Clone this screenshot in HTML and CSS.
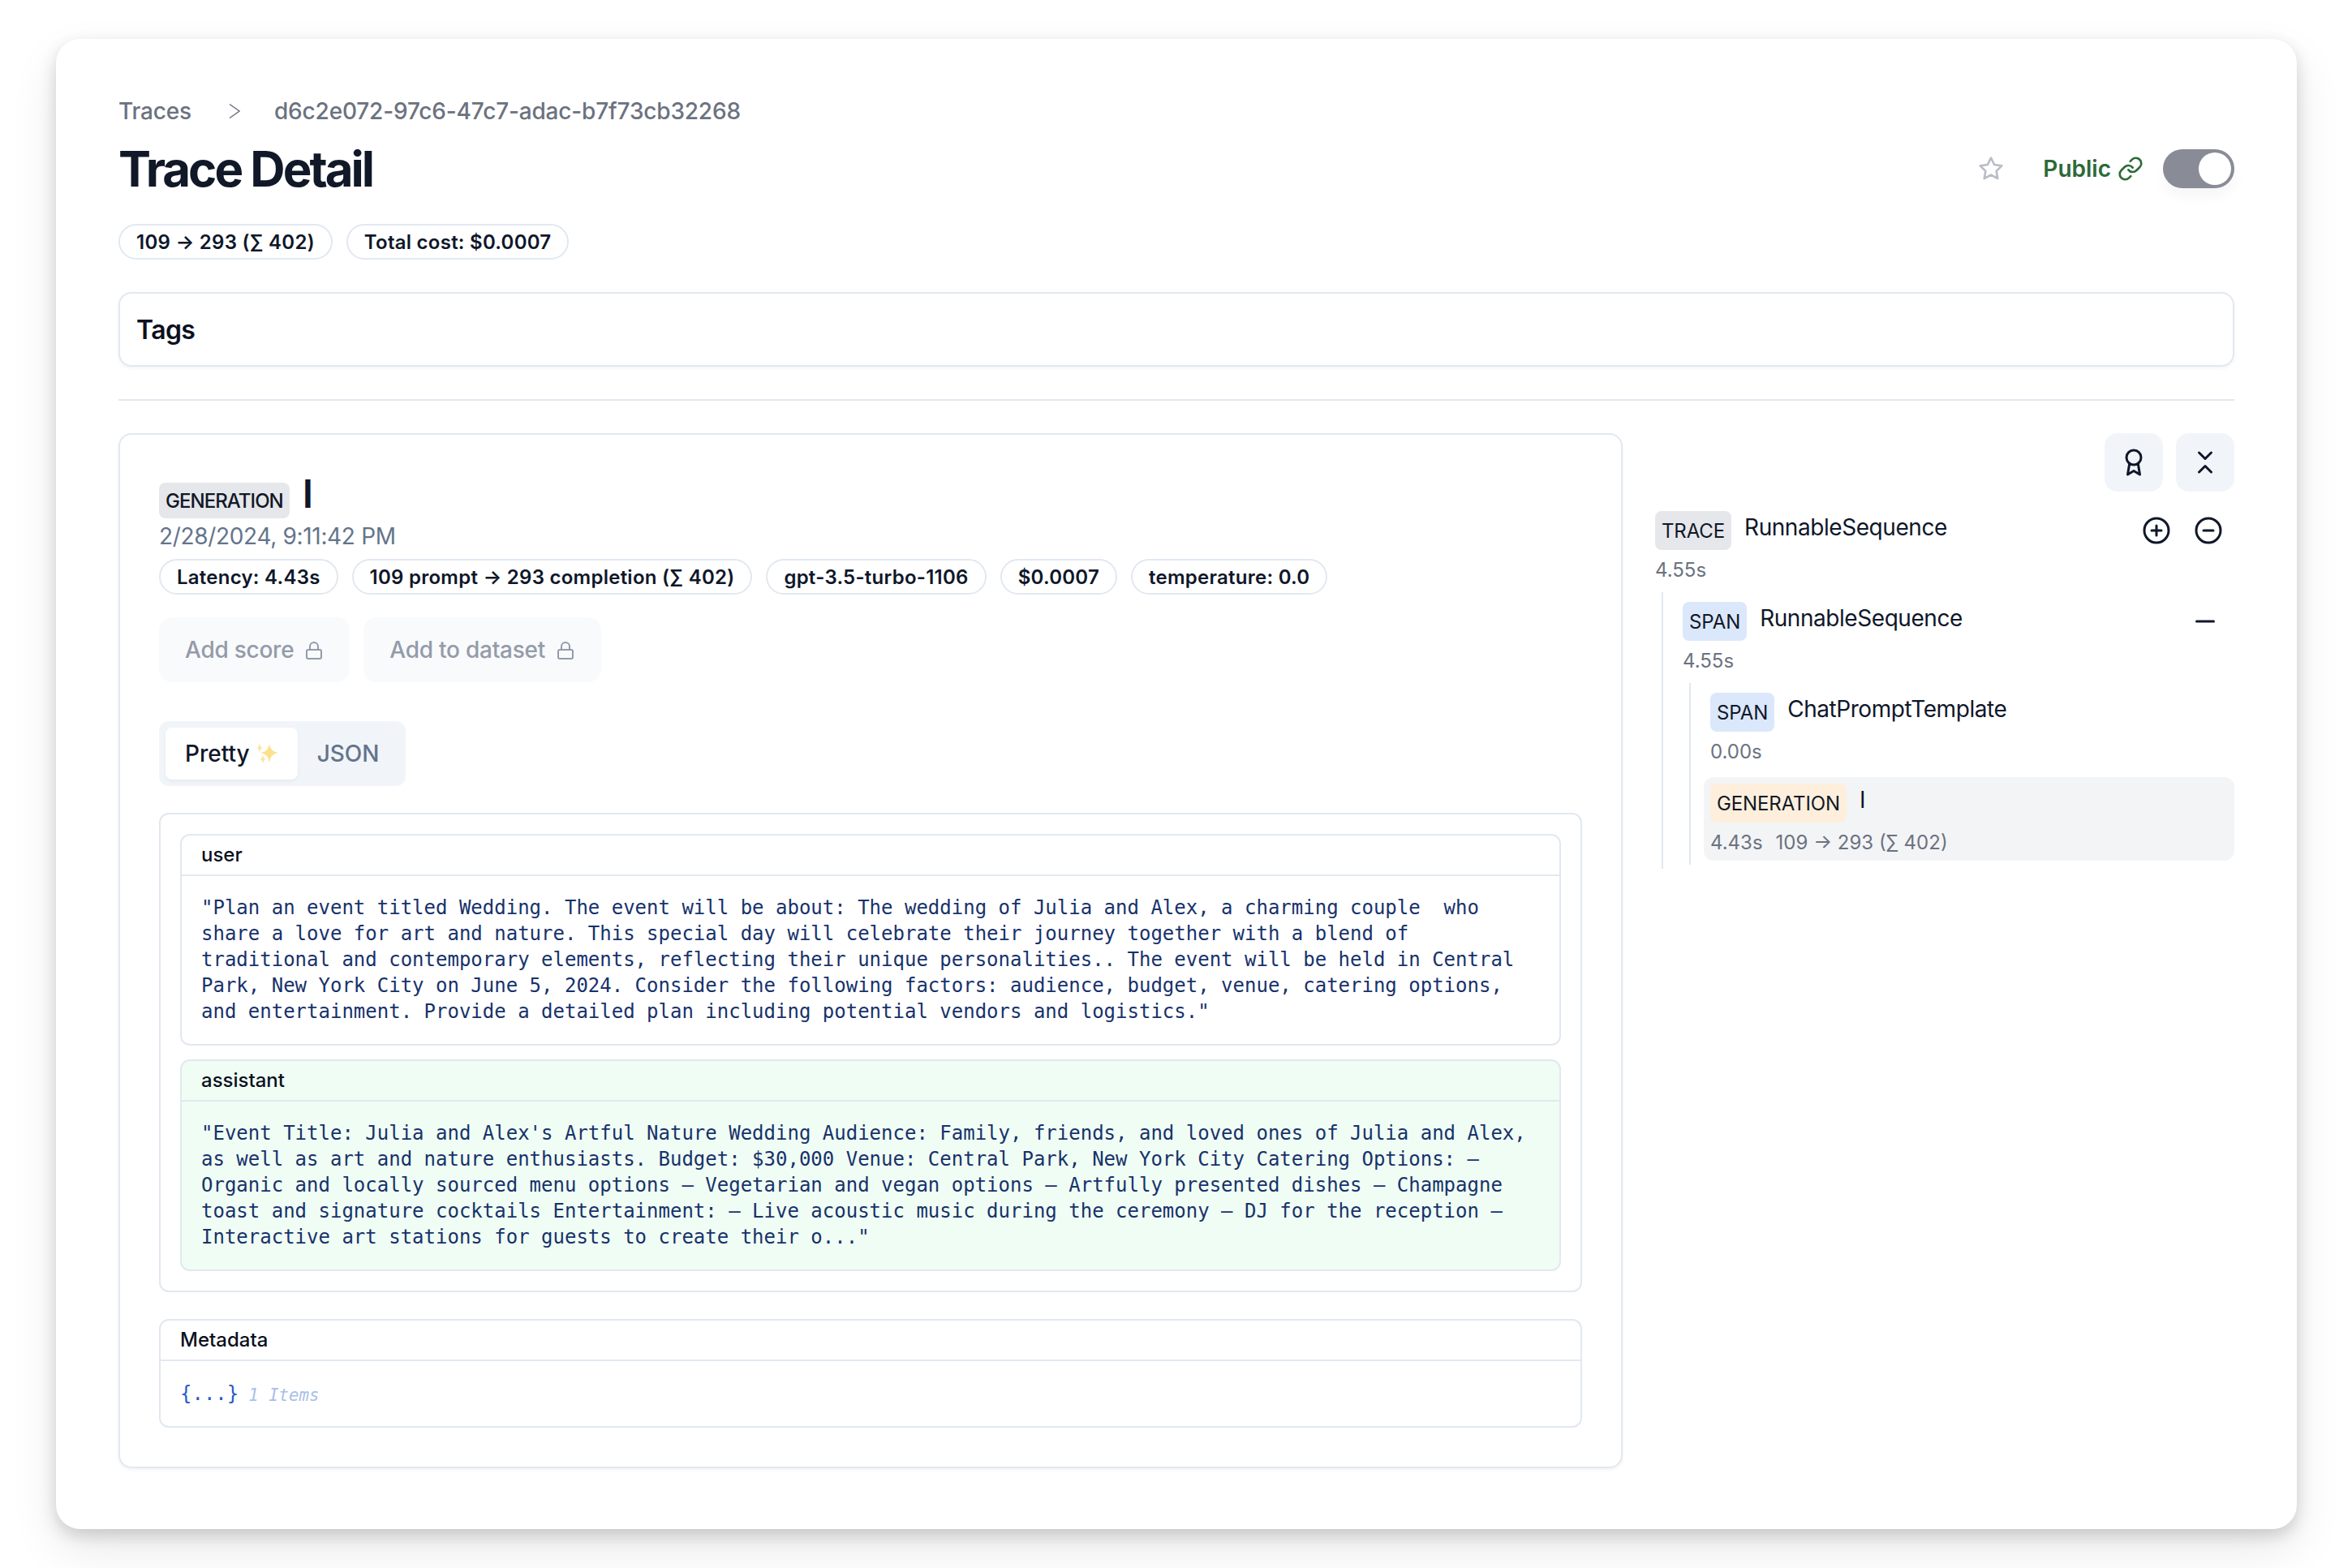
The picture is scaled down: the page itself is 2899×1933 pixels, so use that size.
FILE: index.html
```html
<!DOCTYPE html>
<html lang="en">
<head>
<meta charset="utf-8">
<title>Trace Detail</title>
<link rel="stylesheet" href="styles.css">
</head>
<body>
<main class="window">
  <nav class="crumbs">
    <span>Traces</span>
    <svg class="crumb-chevron" viewBox="0 0 14 18"><path d="M1 .5l12 8.500-12 8.500"/></svg>
    <span>d6c2e072-97c6-47c7-adac-b7f73cb32268</span>
  </nav>
  <header class="title-row">
    <h1>Trace Detail</h1>
    <div class="title-actions">
      <svg class="icon star" viewBox="0 0 24 24"><polygon points="12 2 15.09 8.26 22 9.27 17 14.14 18.18 21.02 12 17.77 5.82 21.02 7 14.14 2 9.27 8.91 8.26"/></svg>
      <span class="public">Public
        <svg class="icon link" viewBox="0 0 24 24"><path d="M10 13a5 5 0 0 0 7.54.54l3-3a5 5 0 0 0-7.07-7.07l-1.72 1.71"/><path d="M14 11a5 5 0 0 0-7.54-.54l-3 3a5 5 0 0 0 7.07 7.07l1.71-1.71"/></svg>
      </span>
      <span class="toggle"><span class="knob"></span></span>
    </div>
  </header>
  <div class="pills top-pills">
    <span class="pill">109 → 293 (∑ 402)</span>
    <span class="pill">Total cost: $0.0007</span>
  </div>
  <section class="tags">Tags</section>
  <hr class="rule">
  <div class="columns">
    <section class="detail">
      <div class="detail-head">
        <span class="badge badge-head">GENERATION</span>
        <h2>I</h2>
      </div>
      <div class="date">2/28/2024, 9:11:42 PM</div>
      <div class="pills meta-pills">
        <span class="pill">Latency: 4.43s</span>
        <span class="pill">109 prompt → 293 completion (∑ 402)</span>
        <span class="pill">gpt-3.5-turbo-1106</span>
        <span class="pill">$0.0007</span>
        <span class="pill">temperature: 0.0</span>
      </div>
      <div class="actions">
        <span class="action score">Add score
          <svg class="icon lock" viewBox="0 0 24 24"><rect x="3" y="11" width="18" height="11" rx="2"/><path d="M7 11V7a5 5 0 0 1 10 0v4"/></svg>
        </span>
        <span class="action dataset">Add to dataset
          <svg class="icon lock" viewBox="0 0 24 24"><rect x="3" y="11" width="18" height="11" rx="2"/><path d="M7 11V7a5 5 0 0 1 10 0v4"/></svg>
        </span>
      </div>
      <div class="tabs">
        <span class="tab tab-active">Pretty
          <svg class="sparkle" viewBox="0 0 27 26"><path d="M16 1Q17.200 10.800 27 12 17.200 13.200 16 24 14.800 13.200 5 12 14.800 10.800 16 1z"/><path class="sparkle-alt" d="M4 0Q4.500 5.500 8 6 4.500 6.500 4 12 3.500 6.500 0 6 3.500 5.500 4 0z"/><path class="sparkle-alt" d="M8 14Q8.500 19.500 12 20 8.500 20.500 8 26 7.500 20.500 4 20 7.500 19.500 8 14z"/></svg>
        </span>
        <span class="tab">JSON</span>
      </div>
      <div class="messages">
        <article class="card">
          <div class="card-head">user</div>
          <p class="mono">"Plan an event titled Wedding. The event will be about: The wedding of Julia and Alex, a charming couple  who
share a love for art and nature. This special day will celebrate their journey together with a blend of
traditional and contemporary elements, reflecting their unique personalities.. The event will be held in Central
Park, New York City on June 5, 2024. Consider the following factors: audience, budget, venue, catering options,
and entertainment. Provide a detailed plan including potential vendors and logistics."</p>
        </article>
        <article class="card card-assistant">
          <div class="card-head">assistant</div>
          <p class="mono">"Event Title: Julia and Alex's Artful Nature Wedding Audience: Family, friends, and loved ones of Julia and Alex,
as well as art and nature enthusiasts. Budget: $30,000 Venue: Central Park, New York City Catering Options: –
Organic and locally sourced menu options – Vegetarian and vegan options – Artfully presented dishes – Champagne
toast and signature cocktails Entertainment: – Live acoustic music during the ceremony – DJ for the reception –
Interactive art stations for guests to create their o..."</p>
        </article>
      </div>
      <article class="card metadata">
        <div class="card-head">Metadata</div>
        <div class="meta-body"><span class="braces">{...}</span> <span class="items">1 Items</span></div>
      </article>
    </section>
    <aside class="tree">
      <div class="tree-tools">
        <span class="tool"><svg class="icon" viewBox="0 0 24 24"><circle cx="12" cy="8" r="6"/><path d="M15.477 12.89 17 22l-5-3-5 3 1.523-9.11"/></svg></span>
        <span class="tool"><svg class="icon" viewBox="0 0 24 24"><path d="m7 20 5-5 5 5"/><path d="m7 4 5 5 5-5"/></svg></span>
      </div>
      <div class="node node-trace">
        <div class="node-row">
          <span class="badge badge-trace">TRACE</span>
          <span class="node-name">RunnableSequence</span>
          <span class="node-icons">
            <svg class="icon" viewBox="0 0 24 24"><circle cx="12" cy="12" r="10"/><path d="M8 12h8"/><path d="M12 8v8"/></svg>
            <svg class="icon" viewBox="0 0 24 24"><circle cx="12" cy="12" r="10"/><path d="M8 12h8"/></svg>
          </span>
        </div>
        <div class="node-stat">4.55s</div>
      </div>
      <div class="branch branch-outer">
        <div class="node-row">
          <span class="badge badge-span">SPAN</span>
          <span class="node-name">RunnableSequence</span>
          <span class="node-icons node-icons-single">
            <svg class="icon" viewBox="0 0 24 24"><path d="M5 12h14"/></svg>
          </span>
        </div>
        <div class="node-stat">4.55s</div>
        <div class="branch branch-inner">
          <div class="node-row">
            <span class="badge badge-span">SPAN</span>
            <span class="node-name">ChatPromptTemplate</span>
          </div>
          <div class="node-stat">0.00s</div>
          <div class="node-selected">
            <div class="node-row">
              <span class="badge badge-gen">GENERATION</span>
              <span class="node-name">I</span>
            </div>
            <div class="node-stat stat-gen"><span>4.43s</span><span>109 → 293 (∑ 402)</span></div>
          </div>
        </div>
      </div>
    </aside>
  </div>
</main>
</body>
</html>
```
FILE: styles.css
```css
* { box-sizing: border-box; }
html, body { margin: 0; }
body {
  width: 2899px;
  height: 1933px;
  overflow: hidden;
  padding: 48px 68px 0 69px;
  background: #fff;
  font-family: Inter, "Liberation Sans", sans-serif;
  color: #0f172a;
}
.window {
  height: 1837px;
  padding: 69px 77px 0;
  background: #fff;
  border-radius: 30px;
  box-shadow: 0 8px 20px rgba(0, 0, 0, .16), 0 25px 60px rgba(0, 0, 0, .09);
}
.icon {
  width: 36px;
  height: 36px;
  fill: none;
  stroke: currentColor;
  stroke-width: 2;
  stroke-linecap: round;
  stroke-linejoin: round;
  flex: none;
}
.crumbs {
  display: flex;
  align-items: center;
  height: 40px;
  font-size: 28px;
  line-height: 40px;
  font-weight: 500;
  letter-spacing: -.17px;
  color: #6b7280;
}
.crumb-chevron {
  width: 14px;
  height: 18px;
  margin: 0 42px 0 46px;
  fill: none;
  stroke: #6b7280;
  stroke-width: 1.4;
}
.title-row {
  display: flex;
  align-items: center;
  justify-content: space-between;
  margin-top: 15px;
}
h1 {
  margin: 0;
  font-size: 60px;
  line-height: 72px;
  font-weight: 700;
  letter-spacing: -3px;
  color: #111827;
}
.title-actions { display: flex; align-items: center; }
.star { width: 32px; height: 32px; color: #b9bdc9; margin-right: 48px; }
.public {
  display: flex;
  align-items: center;
  gap: 8px;
  font-size: 28px;
  font-weight: 600;
  color: #2c6a38;
}
.link { width: 32px; height: 32px; }
.toggle {
  display: flex;
  justify-content: flex-end;
  align-items: center;
  width: 88px;
  height: 48px;
  margin-left: 24px;
  padding: 4px;
  border-radius: 24px;
  background: #898c97;
  box-shadow: 0 10px 16px rgba(0, 0, 0, .04);
}
.knob { width: 40px; height: 40px; border-radius: 50%; background: #fff; }
.pills { display: flex; gap: 17px; }
.pill {
  display: block;
  height: 44px;
  padding: 0 20px;
  border: 2px solid #e2e8f0;
  border-radius: 22px;
  background: #fff;
  font-size: 24px;
  line-height: 41px;
  font-weight: 600;
  letter-spacing: .25px;
  color: #0f172a;
  white-space: nowrap;
}
.top-pills { margin-top: 32px; }
.tags {
  height: 92px;
  margin-top: 40px;
  padding: 0 20px;
  border: 2px solid #e2e8f0;
  border-radius: 16px;
  box-shadow: 0 2px 4px rgba(0, 0, 0, .05);
  font-size: 32px;
  line-height: 90px;
  font-weight: 600;
  letter-spacing: -.6px;
  color: #0b1120;
}
.rule { height: 2px; margin: 40px 0; border: 0; background: #e2e8f0; }
.columns {
  display: grid;
  grid-template-columns: 1854px 714px;
  gap: 40px;
  align-items: start;
}
.detail {
  padding: 48px;
  border: 2px solid #e2e8f0;
  border-radius: 16px;
  box-shadow: 0 2px 4px rgba(0, 0, 0, .05);
}
.detail-head { display: flex; align-items: flex-start; gap: 16px; height: 56px; }
h2 { margin: 1px 0 0; font-size: 48px; line-height: 48px; font-weight: 600; color: #0f172a; }
.badge {
  display: block;
  height: 48px;
  padding: 0 8px;
  border-radius: 8px;
  font-size: 24px;
  line-height: 50px;
  letter-spacing: -.12px;
  color: #111827;
  white-space: nowrap;
}
.badge-head {
  height: 44px;
  margin-top: 11px;
  line-height: 46px;
  background: #e5e7eb;
  font-weight: 500;
  letter-spacing: -.95px;
}
.date { height: 40px; margin-top: 1px; font-size: 28px; line-height: 40px; letter-spacing: -.33px; color: #64748b; }
.meta-pills { margin-top: 8px; }
.actions { display: flex; gap: 17px; margin-top: 28px; }
.action {
  display: flex;
  align-items: center;
  gap: 13px;
  height: 80px;
  padding: 0 32px;
  border-radius: 16px;
  background: #f8fafc;
  font-size: 28px;
  font-weight: 500;
  letter-spacing: -.25px;
  color: #949ba9;
}
.lock { width: 24px; height: 24px; margin-top: 1px; }
.tabs {
  display: inline-flex;
  vertical-align: top;
  height: 80px;
  margin-top: 48px;
  padding: 8px;
  border-radius: 12px;
  background: #f1f5f9;
}
.tab {
  display: flex;
  align-items: center;
  gap: 8px;
  padding: 0 24px;
  border-radius: 8px;
  font-size: 28px;
  font-weight: 500;
  color: #64748b;
}
.tab-active { background: #fff; color: #0f172a; box-shadow: 0 2px 4px rgba(0, 0, 0, .05); }
.sparkle { width: 27px; height: 26px; fill: #fde08a; }
.sparkle-alt { fill: #fde5a0; }
.messages {
  display: flex;
  flex-direction: column;
  gap: 17px;
  margin-top: 33px;
  padding: 24px;
  border: 2px solid #e2e8f0;
  border-radius: 12px;
}
.card { border: 2px solid #e2e8f0; border-radius: 12px; background: #fff; }
.card-assistant { background: #f0fdf4; }
.card-head {
  height: 50px;
  padding: 0 24px;
  border-bottom: 2px solid #e2e8f0;
  font-size: 24px;
  line-height: 47px;
  font-weight: 500;
  color: #0b1120;
}
.mono {
  margin: 0;
  padding: 23px 24px 24px;
  font-family: "DejaVu Sans Mono", monospace;
  font-size: 24px;
  line-height: 32px;
  color: #17326b;
  white-space: pre;
}
.metadata { margin-top: 33px; }
.meta-body {
  display: flex;
  align-items: center;
  gap: 12px;
  padding: 24px;
  height: 80px;
  font-family: "DejaVu Sans Mono", monospace;
  font-size: 24px;
}
.braces { color: #2a5ac6; }
.items { color: #a9bfe8; font-style: italic; font-size: 20.700px; margin-top: 3px; }
.tree-tools { display: flex; justify-content: flex-end; gap: 16px; }
.tool {
  display: flex;
  align-items: center;
  justify-content: center;
  width: 72px;
  height: 72px;
  border-radius: 16px;
  background: #f1f5f9;
  color: #0f172a;
}
.node-trace { margin-top: 24px; }
.node-row { display: flex; align-items: flex-start; gap: 16px; }
.badge-trace { background: #e5e7eb; }
.badge-span { background: #dbe7fb; }
.badge-gen { background: #fdefdc; }
.node-name { font-size: 28px; line-height: 40px; letter-spacing: -.44px; color: #0f172a; }
.node-icons { display: flex; gap: 28px; margin: 6px 14px 0 auto; color: #0f172a; }
.node-icons-single { margin-right: 18px; }
.node-stat { height: 32px; margin-top: 9px; font-size: 24px; line-height: 32px; color: #6b7280; }
.branch { border-left: 2px solid #e2e8f0; }
.branch-outer { margin: 11px 0 0 8px; padding: 12px 0 5px 24px; }
.branch-inner { margin: 11px 0 0 8px; padding: 12px 0 5px 24px; }
.node-selected {
  margin: 15px 0 0 -8px;
  padding: 8px 8px 6px;
  border-radius: 12px;
  background: #f3f4f6;
}
.stat-gen { display: flex; gap: 16px; }
```
